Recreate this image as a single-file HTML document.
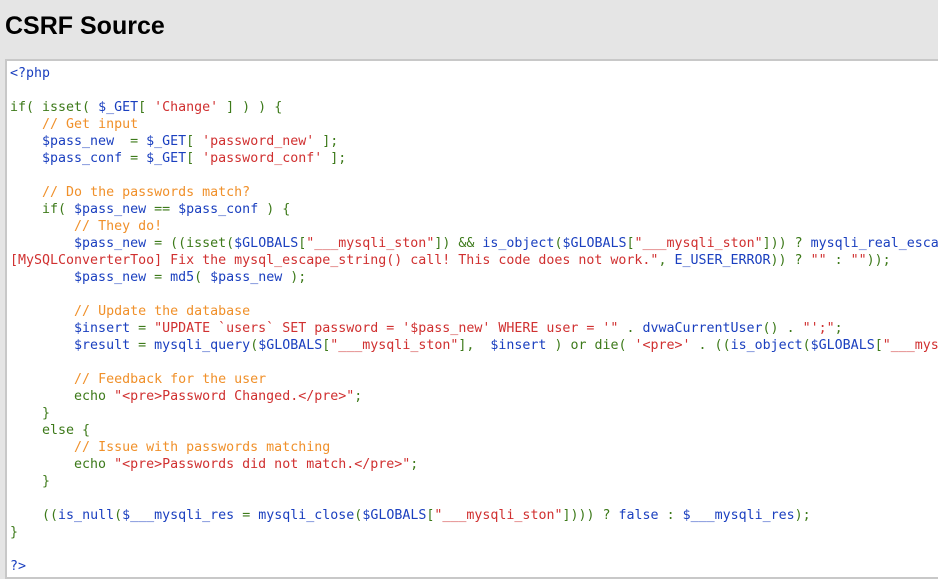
<!DOCTYPE html>
<html><head><meta charset="utf-8"><style>
html,body{margin:0;padding:0;}
body{width:938px;height:578px;background:#e5e5e5;overflow:hidden;position:relative;font-family:"Liberation Sans",sans-serif;}
h1{position:absolute;left:5px;top:10px;margin:0;font-size:25px;font-weight:bold;color:#000;line-height:32px;}
.box{position:absolute;left:5px;top:59px;width:940px;height:516px;background:#fff;border:2px solid #c8c8c8;overflow:hidden;}
pre{margin:0;position:absolute;left:3px;top:4px;font-family:"DejaVu Sans Mono",monospace;font-size:13.3px;line-height:17px;white-space:pre;color:#1a3fbf;}
.k{color:#3d7a1a}.s{color:#d03030}.c{color:#f0902a}.d{color:#1a3fbf}
</style></head><body>
<h1>CSRF Source</h1>
<div class="box"><pre><span class="d">&lt;?php</span>

<span class="k">if( isset( </span>$_GET<span class="k">[ </span><span class="s">'Change'</span><span class="k"> ] ) ) {</span>
    <span class="c">// Get input</span>
    $pass_new  <span class="k">= </span>$_GET<span class="k">[ </span><span class="s">'password_new'</span><span class="k"> ];</span>
    $pass_conf <span class="k">= </span>$_GET<span class="k">[ </span><span class="s">'password_conf'</span><span class="k"> ];</span>

    <span class="c">// Do the passwords match?</span>
<span class="k">    if( </span>$pass_new <span class="k">== </span>$pass_conf <span class="k">) {</span>
        <span class="c">// They do!</span>
        $pass_new <span class="k">= ((isset(</span>$GLOBALS<span class="k">[</span><span class="s">"___mysqli_ston"</span><span class="k">]) &amp;&amp; </span>is_object<span class="k">(</span>$GLOBALS<span class="k">[</span><span class="s">"___mysqli_ston"</span><span class="k">])) ? </span>mysqli_real_escape_string<span class="k">(</span>$GLOBALS<span class="k">[</span><span class="s">"___mysqli_ston"</span><span class="k">],  </span>$pass_new <span class="k">) : ((</span>trigger_error<span class="k">(</span><span class="s">"
[MySQLConverterToo] Fix the mysql_escape_string() call! This code does not work."</span><span class="k">, </span>E_USER_ERROR<span class="k">)) ? </span><span class="s">"" </span><span class="k">: </span><span class="s">""</span><span class="k">));</span>
        $pass_new <span class="k">= </span>md5<span class="k">( </span>$pass_new <span class="k">);</span>

        <span class="c">// Update the database</span>
        $insert <span class="k">= </span><span class="s">"UPDATE `users` SET password = '$pass_new' WHERE user = '" </span><span class="k">. </span>dvwaCurrentUser<span class="k">() . </span><span class="s">"';"</span><span class="k">;</span>
        $result <span class="k">= </span>mysqli_query<span class="k">(</span>$GLOBALS<span class="k">[</span><span class="s">"___mysqli_ston"</span><span class="k">],  </span>$insert <span class="k">) or die( </span><span class="s">'&lt;pre&gt;' </span><span class="k">. ((</span>is_object<span class="k">(</span>$GLOBALS<span class="k">[</span><span class="s">"___mysqli_ston"</span><span class="k">])) ? </span>mysqli_error<span class="k">(</span>$GLOBALS<span class="k">[</span><span class="s">"___mysqli_ston"</span><span class="k">]) : </span>

        <span class="c">// Feedback for the user</span>
<span class="k">        echo </span><span class="s">"&lt;pre&gt;Password Changed.&lt;/pre&gt;"</span><span class="k">;</span>
<span class="k">    }</span>
<span class="k">    else {</span>
        <span class="c">// Issue with passwords matching</span>
<span class="k">        echo </span><span class="s">"&lt;pre&gt;Passwords did not match.&lt;/pre&gt;"</span><span class="k">;</span>
<span class="k">    }</span>

<span class="k">    ((</span>is_null<span class="k">(</span>$___mysqli_res <span class="k">= </span>mysqli_close<span class="k">(</span>$GLOBALS<span class="k">[</span><span class="s">"___mysqli_ston"</span><span class="k">]))) ? </span>false <span class="k">: </span>$___mysqli_res<span class="k">);</span>
<span class="k">}</span>

?&gt;</pre></div>
</body></html>
